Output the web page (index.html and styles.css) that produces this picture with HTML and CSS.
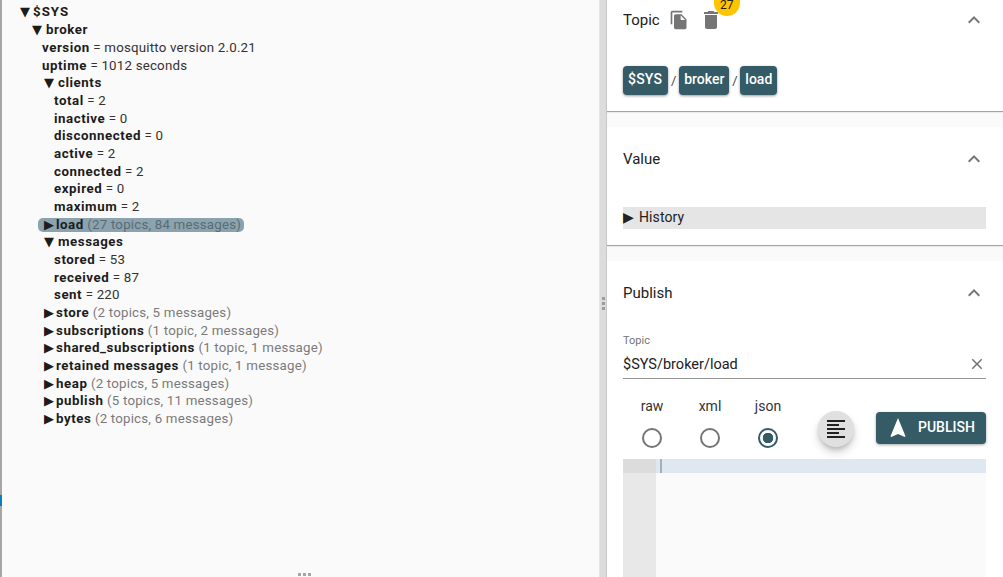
FILE: index.html
```html
<!DOCTYPE html>
<html lang="en">
<head>
<meta charset="utf-8">
<title>MQTT Explorer</title>
<link rel="stylesheet" href="styles.css">
</head>
<body>
<div class="app">
  <main class="tree">
    <i class="edge-mark"></i>
    <div class="row l0"><span class="arrow open">▼</span><b class="sys">$SYS</b></div>
    <div class="row l1"><span class="arrow open">▼</span><b>broker</b></div>
    <div class="row l2"><b>version</b> = mosquitto version 2.0.21</div>
    <div class="row l2"><b>uptime</b> = 1012 seconds</div>
    <div class="row l2a"><span class="arrow open">▼</span><b>clients</b></div>
    <div class="row l3"><b>total</b> = 2</div>
    <div class="row l3"><b>inactive</b> = 0</div>
    <div class="row l3"><b>disconnected</b> = 0</div>
    <div class="row l3"><b>active</b> = 2</div>
    <div class="row l3"><b>connected</b> = 2</div>
    <div class="row l3"><b>expired</b> = 0</div>
    <div class="row l3"><b>maximum</b> = 2</div>
    <div class="row l2a"><span class="selected"><span class="arrow">▶</span><b>load</b> <span class="meta">(27 topics, 84 messages)</span></span></div>
    <div class="row l2a"><span class="arrow open">▼</span><b>messages</b></div>
    <div class="row l3"><b>stored</b> = 53</div>
    <div class="row l3"><b>received</b> = 87</div>
    <div class="row l3"><b>sent</b> = 220</div>
    <div class="row l2a"><span class="arrow">▶</span><b>store</b> <span class="meta">(2 topics, 5 messages)</span></div>
    <div class="row l2a"><span class="arrow">▶</span><b>subscriptions</b> <span class="meta">(1 topic, 2 messages)</span></div>
    <div class="row l2a"><span class="arrow">▶</span><b>shared_subscriptions</b> <span class="meta">(1 topic, 1 message)</span></div>
    <div class="row l2a"><span class="arrow">▶</span><b>retained messages</b> <span class="meta">(1 topic, 1 message)</span></div>
    <div class="row l2a"><span class="arrow">▶</span><b>heap</b> <span class="meta">(2 topics, 5 messages)</span></div>
    <div class="row l2a"><span class="arrow">▶</span><b>publish</b> <span class="meta">(5 topics, 11 messages)</span></div>
    <div class="row l2a"><span class="arrow">▶</span><b>bytes</b> <span class="meta">(2 topics, 6 messages)</span></div>
    <div class="h-grip"><i></i><i></i><i></i></div>
  </main>
  <div class="splitter"><div class="v-grip"><i></i><i></i><i></i></div></div>
  <aside class="side">
    <section class="panel topic">
      <header class="head">
        <span class="title">Topic</span>
        <svg class="tool copy" viewBox="0 0 24 24"><path d="M16 1H4c-1.1 0-2 .9-2 2v14h2V3h12V1zm-1 4l6 6v10c0 1.1-.9 2-2 2H7.99C6.89 23 6 22.1 6 21l.01-14c0-1.1.89-2 1.99-2h7zm-1 7h5.5L14 6.5V12z"/></svg>
        <span class="trash-wrap">
          <svg class="tool" viewBox="0 0 24 24"><path d="M6 19c0 1.1.9 2 2 2h8c1.1 0 2-.9 2-2V7H6v12zM19 4h-3.5l-1-1h-5l-1 1H5v2h14V4z"/></svg>
          <span class="badge">27</span>
        </span>
        <svg class="chev" viewBox="0 0 24 24"><path d="M7.41 15.41L12 10.83l4.59 4.58L18 14l-6-6-6 6z"/></svg>
      </header>
      <div class="crumbs">
        <span class="chip">$SYS</span><span class="slash">/</span><span class="chip">broker</span><span class="slash">/</span><span class="chip">load</span>
      </div>
    </section>
    <section class="panel value">
      <header class="head">
        <span class="title">Value</span>
        <svg class="chev" viewBox="0 0 24 24"><path d="M7.41 15.41L12 10.83l4.59 4.58L18 14l-6-6-6 6z"/></svg>
      </header>
      <div class="history"><span class="hist-arrow">▶</span>History</div>
    </section>
    <section class="panel publish">
      <header class="head">
        <span class="title">Publish</span>
        <svg class="chev" viewBox="0 0 24 24"><path d="M7.41 15.41L12 10.83l4.59 4.58L18 14l-6-6-6 6z"/></svg>
      </header>
      <div class="field">
        <label class="field-label">Topic</label>
        <div class="field-input">
          <span>$SYS/broker/load</span>
          <svg class="clear" viewBox="0 0 24 24"><path d="M19 6.41L17.59 5 12 10.59 6.41 5 5 6.41 10.59 12 5 17.59 6.41 19 12 13.41 17.59 19 19 17.59 13.41 12z"/></svg>
        </div>
      </div>
      <div class="controls">
        <div class="radios">
          <div class="radio"><span>raw</span><i class="dot"></i></div>
          <div class="radio"><span>xml</span><i class="dot"></i></div>
          <div class="radio on"><span>json</span><i class="dot"></i></div>
        </div>
        <button class="fab" type="button"><svg viewBox="0 0 24 24"><path d="M3 3h18v2H3zM3 7h12v2H3zM3 11h18v2H3zM3 15h12v2H3zM3 19h18v2H3z"/></svg></button>
        <button class="send" type="button"><svg viewBox="0 0 24 24"><path d="M12 2L4.5 20.29l.71.71L12 18l6.79 3 .71-.71z"/></svg>PUBLISH</button>
      </div>
      <div class="editor">
        <div class="gutter"><div class="gutter-active"></div></div>
        <div class="code"><div class="active-line"><i class="cursor"></i></div></div>
      </div>
    </section>
  </aside>
</div>
</body>
</html>
```

FILE: styles.css
```css
* { box-sizing: border-box; }
html, body { margin: 0; height: 100%; overflow: hidden; }
body { font-family: Roboto, "Liberation Sans", sans-serif; color: #212121; background: #fafafa; }
.app { display: flex; height: 577px; }

.tree {
  position: relative;
  width: 599px;
  flex: none;
  padding-top: 3px;
  border-left: 2px solid #a6a6a6;
  background: #fafafa;
  font-size: 13.3px;
  letter-spacing: 0.2px;
  color: #333;
}
.edge-mark { position: absolute; left: -2px; top: 495px; width: 2px; height: 11px; background: #0a7fc0; }
.row { height: 17.68px; line-height: 17.68px; white-space: nowrap; }
.row.l0 { height: 18.18px; }
.row b { color: #1c1c1c; font-weight: 700; letter-spacing: 0.55px; }
.l0 { padding-left: 18px; }
.l1 { padding-left: 30px; }
.l2 { padding-left: 40px; }
.l2a { padding-left: 42px; }
.l3 { padding-left: 52px; }
.arrow { display: inline-block; width: 12px; font-size: 13px; line-height: 14px; color: #1c1c1c; letter-spacing: 0; font-family: "DejaVu Sans", sans-serif; }
.arrow.open { width: 14px; }
.l0 .arrow.open { width: 13px; }
.row b.sys { letter-spacing: 1px; }
.meta { color: #7a7a7a; }
.selected { display: inline-block; background: #8ba3ae; border-radius: 5px; margin-left: -6px; padding: 0 3px 0 6px; height: 14px; line-height: 14px; }
.selected .meta { color: #5b6b73; }

.h-grip { position: absolute; left: 296px; bottom: 1px; display: flex; gap: 2px; }
.h-grip i { width: 3px; height: 3px; background: #a5a5a5; }

.splitter {
  position: relative;
  width: 8px;
  flex: none;
  background: #dcdcdc;
  border-right: 1px solid #c8c8c8;
  border-left: 1px solid #e6e6e6;
}
.v-grip { position: absolute; top: 297px; left: 2px; display: flex; flex-direction: column; gap: 2px; }
.v-grip i { width: 3px; height: 3px; background: #9b9b9b; }

.side { flex: 1; min-width: 0; background: #fafafa; }
.panel { background: #fff; padding: 0 17px 0 16px; margin-bottom: 16px; box-shadow: 0 1px 1px rgba(0,0,0,.35); }
.head { display: flex; align-items: center; position: relative; }
.title { font-size: 15px; color: #212121; }
.chev { width: 24px; height: 24px; margin-left: auto; fill: #757575; }

.topic { height: 111px; }
.topic .head { height: 40px; }
.tool { display: block; width: 24px; height: 24px; fill: #757575; }
.tool.copy { width: 20px; height: 20px; margin-left: 9px; }
.trash-wrap { position: relative; margin-left: 10px; }
.badge {
  position: absolute; left: 15px; top: -15px;
  width: 26px; height: 23px;
  padding-top: 6px;
  border-radius: 0 0 13px 13px;
  background: #ffc400;
  color: #222;
  font-size: 12px;
  line-height: 12px;
  text-align: center;
}
.crumbs { display: flex; align-items: center; margin-top: 26px; }
.chip {
  height: 29px; line-height: 27px;
  padding: 0 5px;
  background: #345b66;
  color: #fff;
  border-radius: 4px;
  font-size: 14px;
  font-weight: 500;
  box-shadow: 0 1px 3px rgba(0,0,0,.4);
}
.chip:first-child { padding: 0 6px 0 5px; letter-spacing: .2px; }
.slash { width: 11px; text-align: center; font-size: 13px; color: #444; }

.value { height: 118px; }
.value .head { height: 63px; }
.history { margin-top: 17px; height: 22px; line-height: 21px; background: #e5e5e5; font-size: 14px; color: #212121; letter-spacing: .1px; }
.hist-arrow { display: inline-block; width: 16px; font-size: 14px; line-height: 14px; font-family: "DejaVu Sans", sans-serif; letter-spacing: 0; }

.publish { height: 340px; margin-bottom: 0; }
.publish .head { height: 63px; }
.field { margin-top: 9px; }
.field-label { display: block; height: 16px; font-size: 11px; line-height: 16px; color: #757575; }
.field-input { display: flex; align-items: center; justify-content: space-between; height: 30px; padding-top: 1px; border-bottom: 1px solid #949494; font-size: 14.5px; color: #212121; }
.clear { width: 18px; height: 18px; fill: #757575; }

.controls { position: relative; display: flex; align-items: flex-start; height: 80px; }
.radios { display: flex; padding-top: 19px; }
.radio { width: 58px; display: flex; flex-direction: column; align-items: center; font-size: 14px; line-height: 17px; color: #333; gap: 13px; }
.dot { display: block; width: 20px; height: 20px; border: 2px solid #757575; border-radius: 50%; }
.on .dot { border-color: #345b66; background: radial-gradient(circle, #345b66 0 5px, transparent 5.5px); }
.fab {
  position: absolute; left: 195px; top: 32px;
  width: 36px; height: 36px; padding: 6px;
  border: 0; border-radius: 50%;
  background: #e0e0e0;
  box-shadow: 0 3px 5px -1px rgba(0,0,0,.2), 0 6px 10px 0 rgba(0,0,0,.14);
}
.fab svg { display: block; width: 24px; height: 24px; fill: #222; }
.send {
  position: absolute; right: 0; top: 33px;
  display: flex; align-items: center; gap: 8px;
  width: 110px; height: 32px; padding: 0 0 3px 10px;
  border: 0; border-radius: 4px;
  background: #345b66; color: #fff;
  font: 500 14px Roboto, sans-serif;
  box-shadow: 0 1px 3px rgba(0,0,0,.35);
}
.send svg { display: block; flex: none; width: 24px; height: 24px; fill: #fff; margin-top: 3px; }

.editor { display: flex; height: 130px; background: #fafafa; }
.gutter { width: 33px; background: #e8e8e8; }
.gutter-active { height: 14px; background: #dcdcdc; }
.code { flex: 1; }
.active-line { height: 14px; padding-left: 4px; background: #dfe7f0; }
.cursor { display: block; width: 2px; height: 14px; background: #9fb0be; }
```
